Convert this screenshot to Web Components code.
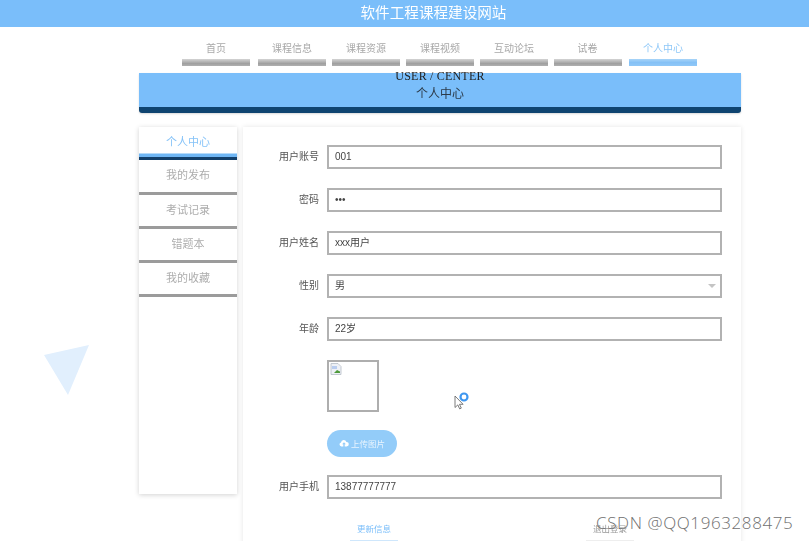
<!DOCTYPE html>
<html lang="zh">
<head>
<meta charset="utf-8">
<title>个人中心</title>
<style>
  html, body { margin: 0; height: 541px; overflow: hidden; background: #fff; }
  body { font-family: "Liberation Sans", "Noto Sans CJK SC", sans-serif; }
  #page { filter: blur(0.55px); height: 541px; }
</style>
</head>
<body>
<div id="page">
  <site-header>软件工程课程建设网站</site-header>
  <nav-bar>
    <nav-item>首页</nav-item>
    <nav-item style="margin-left:2px">课程信息</nav-item>
    <nav-item>课程资源</nav-item>
    <nav-item>课程视频</nav-item>
    <nav-item>互动论坛</nav-item>
    <nav-item style="margin-left:-0.5px">试卷</nav-item>
    <nav-item style="margin-left:1.500px" active>个人中心</nav-item>
  </nav-bar>
  <page-banner title-en="USER / CENTER">个人中心</page-banner>
  <center-layout>
    <side-menu slot="side">
      <side-item active>个人中心</side-item>
      <side-item>我的发布</side-item>
      <side-item>考试记录</side-item>
      <side-item>错题本</side-item>
      <side-item>我的收藏</side-item>
    </side-menu>
    <form-card slot="main">
      <form-field label="用户账号">001</form-field>
      <form-field label="密码">•••</form-field>
      <form-field label="用户姓名">xxx用户</form-field>
      <form-field label="性别" select>男</form-field>
      <form-field label="年龄">22岁</form-field>
      <image-upload>上传图片</image-upload>
      <form-field label="用户手机">13877777777</form-field>
      <form-actions>
        <link-button style="margin-left:91px" color="#7abefa" line="#cfe7fc">更新信息</link-button>
        <link-button style="margin-left:188px" color="#999" line="#eeeeee">退出登录</link-button>
      </form-actions>
    </form-card>
  </center-layout>
  <bg-triangle></bg-triangle>
  <busy-cursor></busy-cursor>
</div>
<water-mark>CSDN @QQ1963288475</water-mark>

<script>
class SiteHeader extends HTMLElement {
    constructor() {
        super();
        this.attachShadow({ mode: "open" });
        this.shadowRoot.innerHTML = `
            <style>
                :host {
                    display: block;
                    height: 27px;
                    line-height: 26px;
                    background: #7abefa;
                    color: #fff;
                    text-align: center;
                    font-size: 14.6px;
                    padding-left: 58px;
                }
            </style>
            <slot></slot>
        `;
    }
}

class NavBar extends HTMLElement {
    constructor() {
        super();
        this.attachShadow({ mode: "open" });
        this.shadowRoot.innerHTML = `
            <style>
                :host {
                    display: flex;
                    gap: 6px;
                    height: 46px;
                    padding-left: 182px;
                    box-sizing: border-box;
                }
            </style>
            <slot></slot>
        `;
    }
}

class NavItem extends HTMLElement {
    constructor() {
        super();
        this.attachShadow({ mode: "open" });
        this.shadowRoot.innerHTML = `
            <style>
                :host {
                    display: flex;
                    flex-direction: column;
                    justify-content: flex-end;
                    width: 68px;
                    height: 39px;
                    text-align: center;
                    font-size: 10px;
                    line-height: 14px;
                    color: #a8a8a8;
                }
                #bar {
                    height: 7px;
                    margin-top: 3px;
                    background: linear-gradient(#d4d4d4, #a0a0a0 65%, #b0b0b0);
                }
                :host([active]) { color: #8fc8f8; }
                :host([active]) #bar { background: linear-gradient(#a8d4f8, #85c1f6 50%, #90c8f8); }
            </style>
            <slot></slot>
            <div id="bar"></div>
        `;
    }
}

class PageBanner extends HTMLElement {
    constructor() {
        super();
        this.attachShadow({ mode: "open" });
        this.shadowRoot.innerHTML = `
            <style>
                :host {
                    display: block;
                    width: 602px;
                    height: 40px;
                    margin-left: 139px;
                    box-sizing: border-box;
                    background: #7abefa;
                    border-bottom: 6px solid #0f4470;
                    border-radius: 0 0 3px 3px;
                    text-align: center;
                    color: #222;
                    box-shadow: 0 1px 2px rgba(0,0,0,.15);
                }
                #en {
                    font: 12px/8px "Liberation Serif", serif;
                    transform: translateY(-1px);
                    letter-spacing: 0.2px;
                }
                #zh {
                    font-size: 12px;
                    line-height: 16px;
                    margin-top: 5px;
                    color: #2b3a48;
                }
            </style>
            <div id="en"></div>
            <div id="zh"><slot></slot></div>
        `;
    }

    connectedCallback() {
        this.shadowRoot.querySelector("#en").textContent = this.getAttribute("title-en");
    }
}

class CenterLayout extends HTMLElement {
    constructor() {
        super();
        this.attachShadow({ mode: "open" });
        this.shadowRoot.innerHTML = `
            <style>
                :host {
                    display: flex;
                    gap: 6px;
                    width: 602px;
                    margin: 14px 0 0 139px;
                    align-items: flex-start;
                }
            </style>
            <slot name="side"></slot>
            <slot name="main"></slot>
        `;
    }
}

class SideMenu extends HTMLElement {
    constructor() {
        super();
        this.attachShadow({ mode: "open" });
        this.shadowRoot.innerHTML = `
            <style>
                :host {
                    display: block;
                    width: 98px;
                    height: 367px;
                    background: #fff;
                    box-shadow: 0 1px 5px rgba(0,0,0,.18);
                }
            </style>
            <slot></slot>
        `;
    }
}

class SideItem extends HTMLElement {
    constructor() {
        super();
        this.attachShadow({ mode: "open" });
        this.shadowRoot.innerHTML = `
            <style>
                :host {
                    display: block;
                    height: 34.3px;
                    box-sizing: border-box;
                    padding-top: 7px;
                    line-height: 16px;
                    text-align: center;
                    font-size: 11px;
                    color: #adadad;
                    border-bottom: 3.700px solid #9b9b9b;
                }
                :host([active]) {
                    color: #86c3f8;
                    height: 33.3px;
                    padding-top: 7px;
                    border-bottom: 3.700px solid #123f6b;
                    box-shadow: inset 0 -3.500px 0 #6fb6f4;
                }
            </style>
            <slot></slot>
        `;
    }
}

class FormCard extends HTMLElement {
    constructor() {
        super();
        this.attachShadow({ mode: "open" });
        this.shadowRoot.innerHTML = `
            <style>
                :host {
                    display: block;
                    width: 498px;
                    height: 440px;
                    box-sizing: border-box;
                    padding: 17.5px 19px 0 16px;
                    background: #fff;
                    box-shadow: 0 0 5px rgba(0,0,0,.1);
                }
            </style>
            <slot></slot>
        `;
    }
}

class FormField extends HTMLElement {
    constructor() {
        super();
        this.attachShadow({ mode: "open" });
        this.shadowRoot.innerHTML = `
            <style>
                :host {
                    display: flex;
                    align-items: center;
                    gap: 8px;
                    height: 24px;
                    margin-bottom: 19px;
                    font-size: 10px;
                    color: #444;
                }
                #label {
                    width: 60px;
                    text-align: right;
                    line-height: 14px;
                    color: #555;
                }
                #box {
                    flex: 1;
                    height: 24px;
                    box-sizing: border-box;
                    border: 2px solid #b2b2b2;
                    padding: 0 6px;
                    line-height: 20px;
                    position: relative;
                }
                #caret {
                    display: none;
                    position: absolute;
                    right: 4px;
                    top: 8px;
                    border: 4px solid transparent;
                    border-top: 4px solid #c4c4c4;
                    border-bottom: 0;
                }
                :host([select]) #caret { display: block; }
            </style>
            <div id="label"></div>
            <div id="box"><slot></slot><div id="caret"></div></div>
        `;
    }

    connectedCallback() {
        this.shadowRoot.querySelector("#label").textContent = this.getAttribute("label");
    }
}

class ImageUpload extends HTMLElement {
    constructor() {
        super();
        this.attachShadow({ mode: "open" });
        this.shadowRoot.innerHTML = `
            <style>
                :host {
                    display: block;
                    padding-left: 68px;
                    margin-bottom: 18px;
                }
                #thumb {
                    width: 52px;
                    height: 52px;
                    box-sizing: border-box;
                    border: 2px solid #aeaeae;
                    padding: 1px;
                    margin-bottom: 18px;
                }
                #thumb svg { display: block; }
                #btn {
                    display: flex;
                    align-items: center;
                    justify-content: center;
                    gap: 2px;
                    width: 70px;
                    height: 27px;
                    border-radius: 14px;
                    background: #93ccf9;
                    color: #e8f4fe;
                    font-size: 8.5px;
                }
            </style>
            <div id="thumb">
                <svg width="12" height="12" viewBox="0 0 12 12">
                    <path d="M1 .5h7l3 3v8H1z" fill="#eef1f6" stroke="#b5bcc6" stroke-width=".8"/>
                    <path d="M2 3h5v3H2z" fill="#b9cdf0"/>
                    <path d="M4 10l3-3 3 1.500V10z" fill="#4f9a3c"/>
                </svg>
            </div>
            <div id="btn">
                <svg width="10" height="8" viewBox="0 0 10 8">
                    <path d="M2.4 7.5A2.1 2.1 0 0 1 2 3.4 2.8 2.8 0 0 1 7.4 2.9 2.3 2.3 0 0 1 7.6 7.5H5.7V5.2h1.2L5 3.2 3.1 5.2h1.2v2.3z" fill="#fff"/>
                </svg>
                <slot></slot>
            </div>
        `;
    }
}

class FormActions extends HTMLElement {
    constructor() {
        super();
        this.attachShadow({ mode: "open" });
        this.shadowRoot.innerHTML = `
            <style>
                :host {
                    display: flex;
                }
            </style>
            <slot></slot>
        `;
    }
}

class LinkButton extends HTMLElement {
    constructor() {
        super();
        this.attachShadow({ mode: "open" });
        this.shadowRoot.innerHTML = `
            <style>
                :host {
                    display: block;
                    width: 48px;
                    height: 23.5px;
                    box-sizing: border-box;
                    text-align: center;
                    font-size: 8.5px;
                    line-height: 22px;
                    border-bottom: 1px solid;
                }
            </style>
            <slot></slot>
        `;
    }

    connectedCallback() {
        this.style.color = this.getAttribute("color");
        this.style.borderBottomColor = this.getAttribute("line");
    }
}

// decoration floating in the page background
class BgTriangle extends HTMLElement {
    constructor() {
        super();
        this.attachShadow({ mode: "open" });
        this.shadowRoot.innerHTML = `
            <style>
                :host { position: absolute; left: 44px; top: 344px; width: 46px; height: 52px; }
            </style>
            <svg width="46" height="52" viewBox="0 0 46 52">
                <path d="M0 11 45 1 24 51z" fill="#e1effd"/>
            </svg>
        `;
    }
}

class BusyCursor extends HTMLElement {
    constructor() {
        super();
        this.attachShadow({ mode: "open" });
        this.shadowRoot.innerHTML = `
            <style>
                :host { position: absolute; left: 453px; top: 391px; width: 18px; height: 20px; }
            </style>
            <svg width="18" height="20" viewBox="0 0 18 20">
                <path d="M2 5v11.500l2.800-2.600 1.900 4 1.600-.8-1.800-3.800h3.600z" fill="#fff" stroke="#6d6d6d" stroke-width=".9"/>
                <circle cx="11" cy="6" r="3.500" fill="#fff" stroke="#3f97f0" stroke-width="2.200"/>
            </svg>
        `;
    }
}

class WaterMark extends HTMLElement {
    constructor() {
        super();
        this.attachShadow({ mode: "open" });
        this.shadowRoot.innerHTML = `
            <style>
                :host {
                    position: absolute;
                    left: 596px;
                    top: 513px;
                    font: 300 17px/20px "Open Sans", "Noto Sans", sans-serif;
                    letter-spacing: 0.6px;
                    color: #707070;
                    white-space: nowrap;
                }
            </style>
            <slot></slot>
        `;
    }
}

customElements.define("site-header", SiteHeader);
customElements.define("nav-bar", NavBar);
customElements.define("nav-item", NavItem);
customElements.define("page-banner", PageBanner);
customElements.define("center-layout", CenterLayout);
customElements.define("side-menu", SideMenu);
customElements.define("side-item", SideItem);
customElements.define("form-card", FormCard);
customElements.define("form-field", FormField);
customElements.define("image-upload", ImageUpload);
customElements.define("form-actions", FormActions);
customElements.define("link-button", LinkButton);
customElements.define("bg-triangle", BgTriangle);
customElements.define("busy-cursor", BusyCursor);
customElements.define("water-mark", WaterMark);
</script>
</body>
</html>
